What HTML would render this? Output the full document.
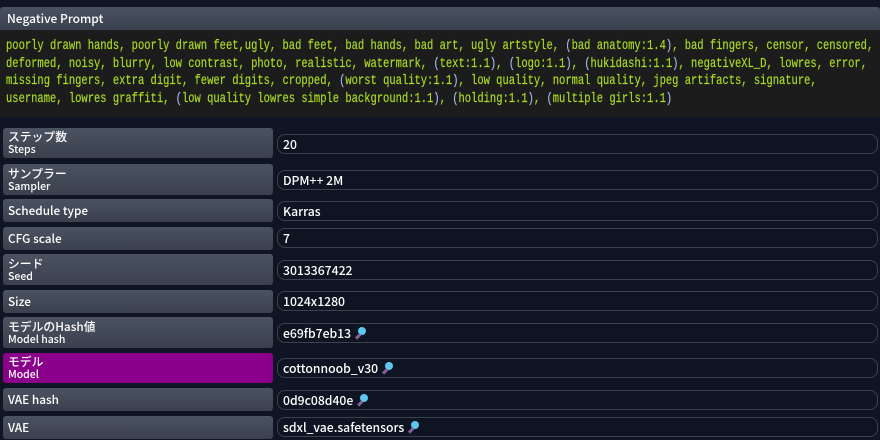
<!DOCTYPE html>
<html><head><meta charset="utf-8"><style>
body{margin:0;width:880px;height:440px;overflow:hidden;background:#0f1522;font-family:"Liberation Sans","Noto Sans CJK JP",sans-serif;position:relative}
.hdr{position:absolute;left:0;top:7px;width:880px;height:23px;background:linear-gradient(#4a5160,#3a404e);color:#fff;font-size:12px;line-height:23px;padding-left:7px;box-sizing:border-box;font-family:"Noto Sans CJK JP",sans-serif;font-weight:500;border-radius:3px 3px 0 0}
.np{position:absolute;left:0;top:30px;width:880px;height:87px;background:#1c1c1c}
.npt{position:absolute;left:6px;top:38px;transform:scaleX(0.748);transform-origin:0 0;font-family:"Liberation Mono",monospace;font-size:14px;line-height:17.5px;color:#aadb22;white-space:pre;-webkit-text-stroke:0.2px #aadb22}
.p{color:#a5b8ee;-webkit-text-stroke:0.2px #a5b8ee}
.l{position:absolute;left:3px;width:270px;border-radius:3px;background:linear-gradient(#4b5261,#3a404d);color:#fff;font-family:"Noto Sans CJK JP",sans-serif;box-sizing:border-box;padding-left:5px;display:flex;flex-direction:column;justify-content:center}
.l .a{font-size:11.8px;line-height:14px;font-weight:500}
.l .b{font-size:10.5px;line-height:12px;font-weight:500}
.l.m{background:#8a008a}
.i{position:absolute;left:277px;width:601px;height:20px;border:1px solid #3a4252;border-radius:8px;background:#0e1422;box-sizing:border-box;color:#fff;font-family:"Noto Sans CJK JP",sans-serif;font-weight:500;font-size:12.2px;line-height:18px;padding-left:5px}
.k{display:inline-block;width:12px;height:12px;position:relative;vertical-align:middle;margin-left:3px;margin-top:-3px}
.k:before{content:"";position:absolute;right:0;top:0;width:8px;height:8px;border-radius:50%;background:#5ac8f0}
.k:after{content:"";position:absolute;left:1px;top:8px;width:6px;height:2.5px;background:#8a5fa0;transform:rotate(-45deg)}
</style></head><body>
<div class="hdr">Negative Prompt</div>
<div class="np"></div>
<div class="npt">poorly drawn hands, poorly drawn feet,ugly, bad feet, bad hands, bad art, ugly artstyle, <span class="p">(</span>bad anatomy:1.4<span class="p">)</span>, bad fingers, censor, censored,
deformed, noisy, blurry, low contrast, photo, realistic, watermark, <span class="p">(</span>text:1.1<span class="p">)</span>, <span class="p">(</span>logo:1.1<span class="p">)</span>, <span class="p">(</span>hukidashi:1.1<span class="p">)</span>, negativeXL_D, lowres, error,
missing fingers, extra digit, fewer digits, cropped, <span class="p">(</span>worst quality:1.1<span class="p">)</span>, low quality, normal quality, jpeg artifacts, signature,
username, lowres graffiti, <span class="p">(</span>low quality lowres simple background:1.1<span class="p">)</span>, <span class="p">(</span>holding:1.1<span class="p">)</span>, <span class="p">(</span>multiple girls:1.1<span class="p">)</span></div>

<div class="l" style="top:128px;height:30px"><span class="a">ステップ数</span><span class="b">Steps</span></div>
<div class="i" style="top:134px">20</div>
<div class="l" style="top:164px;height:31px"><span class="a">サンプラー</span><span class="b">Sampler</span></div>
<div class="i" style="top:170px">DPM++ 2M</div>
<div class="l" style="top:199px;height:23px"><span class="a">Schedule type</span></div>
<div class="i" style="top:201px">Karras</div>
<div class="l" style="top:227px;height:23px"><span class="a">CFG scale</span></div>
<div class="i" style="top:228px">7</div>
<div class="l" style="top:254px;height:31px"><span class="a">シード</span><span class="b">Seed</span></div>
<div class="i" style="top:260px">3013367422</div>
<div class="l" style="top:290px;height:23px"><span class="a">Size</span></div>
<div class="i" style="top:291px">1024x1280</div>
<div class="l" style="top:317px;height:31px"><span class="a">モデルのHash値</span><span class="b">Model hash</span></div>
<div class="i" style="top:323px">e69fb7eb13<span class="k"></span></div>
<div class="l m" style="top:353px;height:30px"><span class="a">モデル</span><span class="b">Model</span></div>
<div class="i" style="top:358px">cottonnoob_v30<span class="k"></span></div>
<div class="l" style="top:388px;height:23px"><span class="a">VAE hash</span></div>
<div class="i" style="top:390px">0d9c08d40e<span class="k"></span></div>
<div class="l" style="top:416px;height:23px"><span class="a">VAE</span></div>
<div class="i" style="top:417px">sdxl_vae.safetensors<span class="k"></span></div>
</body></html>
